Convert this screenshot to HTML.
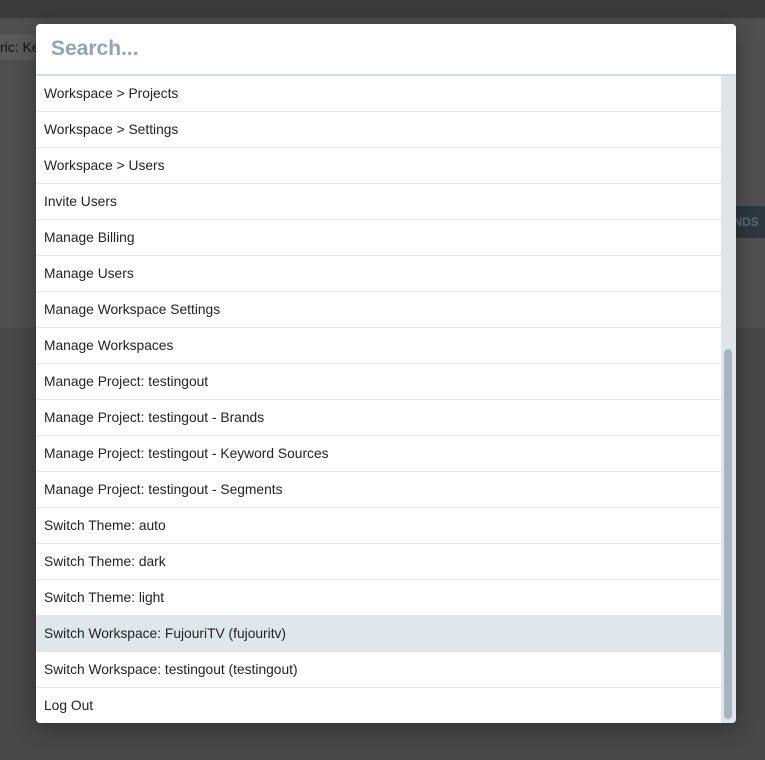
<!DOCTYPE html>
<html><head><style>
body{margin:0;width:765px;height:760px;background:#474747;position:relative;overflow:hidden;font-family:"Liberation Sans",Roboto,sans-serif}
.top{position:absolute;left:0;top:0;width:765px;height:18px;background:#3b3b3b}
.band{position:absolute;left:0;top:18px;width:765px;height:310px;background:#4f4f4f}
.chip{position:absolute;left:0;top:34px;width:40px;height:26px;background:#5a5a5a;font-size:14px;line-height:26px;color:#111;white-space:nowrap;overflow:hidden}
.chip2{position:absolute;left:730px;top:206px;width:40px;height:32px;background:#2c383d;border-radius:4px;color:#5a6a70;font-weight:bold;font-size:12px;line-height:32px}
.modal{position:absolute;left:36px;top:24px;width:700px;height:699px;background:#fff;border-radius:4px;overflow:hidden;box-shadow:0 4px 20px rgba(0,0,0,.35)}
.search{height:52px;border-bottom:2px solid #d5dde1;box-sizing:border-box;padding-left:15px;font-size:21px;font-weight:bold;color:#8fa7b3;line-height:50px}
.list{position:absolute;top:52px;left:0;width:685px}
.row{height:35px;border-bottom:1px solid #e4e4e4;padding-left:8px;font-size:13.8px;line-height:36px;color:#222}
.row.sel{background:#e0e7e9}
.track{position:absolute;left:685px;top:52px;width:15px;height:647px;background:#dfe5e8}
.thumb{position:absolute;left:688px;top:325px;width:8px;height:370px;background:#a4b7c1;border-radius:4px}
</style></head><body>
<div class="top"></div><div class="band"></div>
<div class="chip">ric: Key</div>
<div class="chip2">&nbsp;NDS</div>
<div class="modal">
<div class="search">Search...</div>
<div class="list">
<div class="row">Workspace &gt; Projects</div>
<div class="row">Workspace &gt; Settings</div>
<div class="row">Workspace &gt; Users</div>
<div class="row">Invite Users</div>
<div class="row">Manage Billing</div>
<div class="row">Manage Users</div>
<div class="row">Manage Workspace Settings</div>
<div class="row">Manage Workspaces</div>
<div class="row">Manage Project: testingout</div>
<div class="row">Manage Project: testingout - Brands</div>
<div class="row">Manage Project: testingout - Keyword Sources</div>
<div class="row">Manage Project: testingout - Segments</div>
<div class="row">Switch Theme: auto</div>
<div class="row">Switch Theme: dark</div>
<div class="row">Switch Theme: light</div>
<div class="row sel">Switch Workspace: FujouriTV (fujouritv)</div>
<div class="row">Switch Workspace: testingout (testingout)</div>
<div class="row" style="border-bottom:none">Log Out</div>
</div>
<div class="track"></div><div class="thumb"></div>
</div>
</body></html>
